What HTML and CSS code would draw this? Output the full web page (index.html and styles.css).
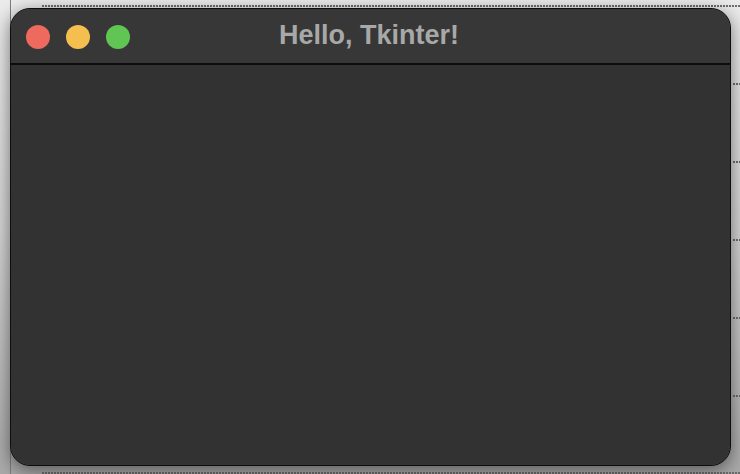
FILE: index.html
```html
<!DOCTYPE html>
<html>
<head>
<meta charset="utf-8">
<link rel="stylesheet" href="styles.css">
</head>
<body>
<div class="desktop">
  <div class="vline"></div>
  <div class="dots dots-top"></div>
  <div class="dots dots-bottom"></div>
  <div class="dots dots-right" style="top:83px"></div>
  <div class="dots dots-right" style="top:161px"></div>
  <div class="dots dots-right" style="top:239px"></div>
  <div class="dots dots-right" style="top:317px"></div>
  <div class="dots dots-right" style="top:395px"></div>
  <div class="window">
    <div class="titlebar">
      <div class="lights">
        <span class="light red"></span>
        <span class="light yellow"></span>
        <span class="light green"></span>
      </div>
      <div class="title">Hello, Tkinter!</div>
      <div class="spacer"></div>
    </div>
    <div class="content"></div>
  </div>
</div>
</body>
</html>
```
FILE: styles.css
```css
html, body {
  margin: 0;
  padding: 0;
  overflow: hidden;
}
.desktop {
  position: relative;
  width: 740px;
  height: 474px;
  background: linear-gradient(to bottom, #ececec 0%, #d4d4d4 50%, #a9a9a9 100%);
  overflow: hidden;
}
.vline {
  position: absolute;
  left: 10px;
  top: 0;
  width: 1px;
  height: 474px;
  background: #7c7c7c;
}
.dots {
  position: absolute;
  height: 2px;
  background: repeating-linear-gradient(to right, #6e6e6e 0 2px, transparent 2px 3px);
}
.dots-top {
  top: 5px;
  left: 42px;
  right: 0;
}
.dots-bottom {
  top: 472px;
  left: 42px;
  right: 0;
}
.dots-right {
  left: 733px;
  right: 0;
}
.window {
  position: absolute;
  left: 10px;
  top: 8px;
  width: 721px;
  height: 458px;
  box-sizing: border-box;
  border: 1px solid #0e0e0e;
  border-radius: 20px;
  background: #323232;
  box-shadow: inset 0 0 0 1px #5a5a5a, 0 4px 18px rgba(0, 0, 0, 0.5);
  overflow: hidden;
  display: flex;
  flex-direction: column;
}
.titlebar {
  height: 56px;
  flex: none;
  box-sizing: border-box;
  background: #373737;
  border-bottom: 2px solid #0c0c0c;
  display: grid;
  grid-template-columns: 1fr auto 1fr;
  align-items: center;
  padding: 1px 15px 0 15px;
}
.lights {
  display: flex;
  gap: 16px;
  align-items: center;
}
.light {
  width: 24px;
  height: 24px;
  border-radius: 50%;
  display: block;
}
.red { background: #ee6a5e; }
.yellow { background: #f5bf4f; }
.green { background: #61c554; }
.title {
  font-family: "Liberation Sans", Arial, sans-serif;
  font-weight: bold;
  font-size: 27px;
  color: #a8a8a8;
  line-height: 1;
  padding-bottom: 2px;
  padding-right: 3px;
}
.content {
  flex: 1;
  background: #323232;
}
```
